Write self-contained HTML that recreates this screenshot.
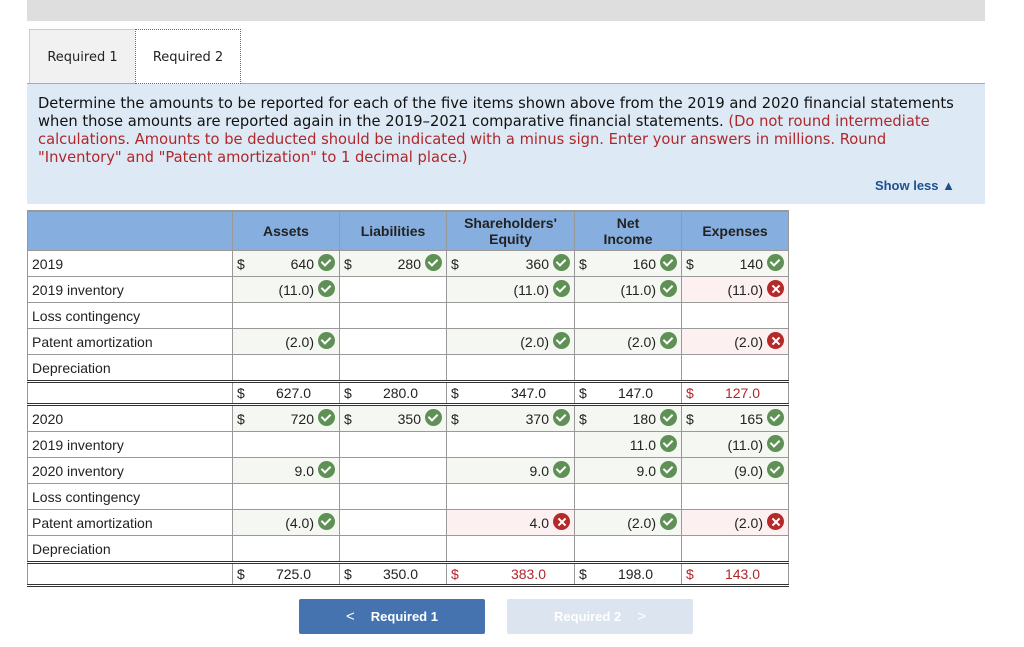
<!DOCTYPE html>
<html><head><meta charset="utf-8"><style>
body{margin:0;background:#fff;width:1024px;height:647px;overflow:hidden;font-family:"Liberation Sans",Arial,sans-serif;position:relative}
.top{position:absolute;left:27px;top:0;width:958px;height:21px;background:#dedede}
.tabs{position:absolute;left:27px;top:29px;width:958px;height:54px;border-bottom:1px solid #aaa}
.tab{position:absolute;top:0;height:53px;line-height:55px;font-family:"DejaVu Sans",Verdana,sans-serif;font-size:13px;color:#222;text-align:center}
.t1{left:2px;width:105px;background:#f1f1f1;border:1px solid #ccc;border-bottom:none}
.t2{left:108px;width:104px;background:#fff;border:1px dotted #3a6fb0;height:53px}
.inst{position:absolute;left:27px;top:84px;width:958px;height:120px;background:#ddeaf6}
.inst p{margin:11px 30px 0 11px;font-family:"DejaVu Sans",Verdana,sans-serif;font-size:14.7px;line-height:18px;color:#111}
.red{color:#b0272a}
.show{position:absolute;right:30px;top:94px;font-size:13px;font-weight:bold;color:#1f4f8f}
table{position:absolute;left:27px;top:210px;border-collapse:collapse;table-layout:fixed;font-size:14px;color:#222}
td,th{border:1px solid #999;padding:0 4px;white-space:nowrap}
th{background:#86aede;height:38px;font-size:14px;color:#222;line-height:16px;border-top:2px solid #999}
td{height:25px}
.l{padding-left:4px}
.g{background:#f5f8f2}
.p{background:#fdf0f0}
.c{display:flex;align-items:center;height:25px}
.c .d{flex:0 0 auto}
.c .v{flex:1;text-align:right}
.ic{display:inline-block;width:17px;height:17px;border-radius:50%;margin-left:4px;vertical-align:middle;position:relative;top:-1px}
.ok{background:#5f9055}
.no{background:#b42a2a}
.ok:after{content:"";position:absolute;left:5px;top:3px;width:4px;height:7px;border:solid #fff;border-width:0 2px 2px 0;transform:rotate(45deg)}
.no:before,.no:after{content:"";position:absolute;left:8px;top:4px;width:2px;height:10px;background:#fff;transform:rotate(45deg)}
.no:after{transform:rotate(-45deg)}
tr.tot td{border-top:3px double #333;border-bottom:3px double #333;height:20px}
tr.tot .c{height:20px}
.rd{color:#b0272a}
.b1{position:absolute;left:299px;top:599px;width:186px;height:35px;background:#4573b0;color:#fff;border-radius:2px;font-size:13px;font-weight:bold;line-height:35px;text-align:center}
.b2{position:absolute;left:507px;top:599px;width:186px;height:35px;background:#dbe4ef;color:#fff;border-radius:2px;font-size:13px;font-weight:bold;line-height:35px;text-align:center}
</style></head><body>
<div class="top"></div>
<div class="tabs"><div class="tab t1">Required 1</div><div class="tab t2">Required 2</div></div>
<div class="inst"><p>Determine the amounts to be reported for each of the five items shown above from the 2019 and 2020 financial statements when those amounts are reported again in the 2019–2021 comparative financial statements. <span class="red">(Do not round intermediate calculations. Amounts to be deducted should be indicated with a minus sign. Enter your answers in millions. Round "Inventory" and "Patent amortization" to 1 decimal place.)</span></p>
<div class="show">Show less ▲</div></div>
<table>
<colgroup><col style="width:205px"><col style="width:107px"><col style="width:107px"><col style="width:128px"><col style="width:107px"><col style="width:107px"></colgroup>
<tr><th></th><th>Assets</th><th>Liabilities</th><th>Shareholders'<br>Equity</th><th>Net<br>Income</th><th>Expenses</th></tr>
<tr><td class="l">2019</td>
<td class="g"><div class="c"><span class="d">$</span><span class="v">640</span><i class="ic ok"></i></div></td>
<td class="g"><div class="c"><span class="d">$</span><span class="v">280</span><i class="ic ok"></i></div></td>
<td class="g"><div class="c"><span class="d">$</span><span class="v">360</span><i class="ic ok"></i></div></td>
<td class="g"><div class="c"><span class="d">$</span><span class="v">160</span><i class="ic ok"></i></div></td>
<td class="g"><div class="c"><span class="d">$</span><span class="v">140</span><i class="ic ok"></i></div></td></tr>
<tr><td class="l">2019 inventory</td>
<td class="g"><div class="c"><span class="v">(11.0)</span><i class="ic ok"></i></div></td><td></td>
<td class="g"><div class="c"><span class="v">(11.0)</span><i class="ic ok"></i></div></td>
<td class="g"><div class="c"><span class="v">(11.0)</span><i class="ic ok"></i></div></td>
<td class="p"><div class="c"><span class="v">(11.0)</span><i class="ic no"></i></div></td></tr>
<tr><td class="l">Loss contingency</td><td></td><td></td><td></td><td></td><td></td></tr>
<tr><td class="l">Patent amortization</td>
<td class="g"><div class="c"><span class="v">(2.0)</span><i class="ic ok"></i></div></td><td></td>
<td class="g"><div class="c"><span class="v">(2.0)</span><i class="ic ok"></i></div></td>
<td class="g"><div class="c"><span class="v">(2.0)</span><i class="ic ok"></i></div></td>
<td class="p"><div class="c"><span class="v">(2.0)</span><i class="ic no"></i></div></td></tr>
<tr><td class="l">Depreciation</td><td></td><td></td><td></td><td></td><td></td></tr>
<tr class="tot"><td></td>
<td><div class="c"><span class="d">$</span><span class="v" style="padding-right:24px">627.0</span></div></td>
<td><div class="c"><span class="d">$</span><span class="v" style="padding-right:24px">280.0</span></div></td>
<td><div class="c"><span class="d">$</span><span class="v" style="padding-right:24px">347.0</span></div></td>
<td><div class="c"><span class="d">$</span><span class="v" style="padding-right:24px">147.0</span></div></td>
<td class="rd"><div class="c"><span class="d">$</span><span class="v" style="padding-right:24px">127.0</span></div></td></tr>
<tr><td class="l">2020</td>
<td class="g"><div class="c"><span class="d">$</span><span class="v">720</span><i class="ic ok"></i></div></td>
<td class="g"><div class="c"><span class="d">$</span><span class="v">350</span><i class="ic ok"></i></div></td>
<td class="g"><div class="c"><span class="d">$</span><span class="v">370</span><i class="ic ok"></i></div></td>
<td class="g"><div class="c"><span class="d">$</span><span class="v">180</span><i class="ic ok"></i></div></td>
<td class="g"><div class="c"><span class="d">$</span><span class="v">165</span><i class="ic ok"></i></div></td></tr>
<tr><td class="l">2019 inventory</td><td></td><td></td><td></td>
<td class="g"><div class="c"><span class="v">11.0</span><i class="ic ok"></i></div></td>
<td class="g"><div class="c"><span class="v">(11.0)</span><i class="ic ok"></i></div></td></tr>
<tr><td class="l">2020 inventory</td>
<td class="g"><div class="c"><span class="v">9.0</span><i class="ic ok"></i></div></td><td></td>
<td class="g"><div class="c"><span class="v">9.0</span><i class="ic ok"></i></div></td>
<td class="g"><div class="c"><span class="v">9.0</span><i class="ic ok"></i></div></td>
<td class="g"><div class="c"><span class="v">(9.0)</span><i class="ic ok"></i></div></td></tr>
<tr><td class="l">Loss contingency</td><td></td><td></td><td></td><td></td><td></td></tr>
<tr><td class="l">Patent amortization</td>
<td class="g"><div class="c"><span class="v">(4.0)</span><i class="ic ok"></i></div></td><td></td>
<td class="p"><div class="c"><span class="v">4.0</span><i class="ic no"></i></div></td>
<td class="g"><div class="c"><span class="v">(2.0)</span><i class="ic ok"></i></div></td>
<td class="p"><div class="c"><span class="v">(2.0)</span><i class="ic no"></i></div></td></tr>
<tr><td class="l">Depreciation</td><td></td><td></td><td></td><td></td><td></td></tr>
<tr class="tot"><td></td>
<td><div class="c"><span class="d">$</span><span class="v" style="padding-right:24px">725.0</span></div></td>
<td><div class="c"><span class="d">$</span><span class="v" style="padding-right:24px">350.0</span></div></td>
<td class="rd"><div class="c"><span class="d">$</span><span class="v" style="padding-right:24px">383.0</span></div></td>
<td><div class="c"><span class="d">$</span><span class="v" style="padding-right:24px">198.0</span></div></td>
<td class="rd"><div class="c"><span class="d">$</span><span class="v" style="padding-right:24px">143.0</span></div></td></tr>
</table>
<div class="b1"><span style="font-weight:normal;font-size:15px;margin-right:16px">&lt;</span>Required 1</div>
<div class="b2">Required 2<span style="font-weight:normal;font-size:15px;margin-left:16px">&gt;</span></div>
</body></html>
